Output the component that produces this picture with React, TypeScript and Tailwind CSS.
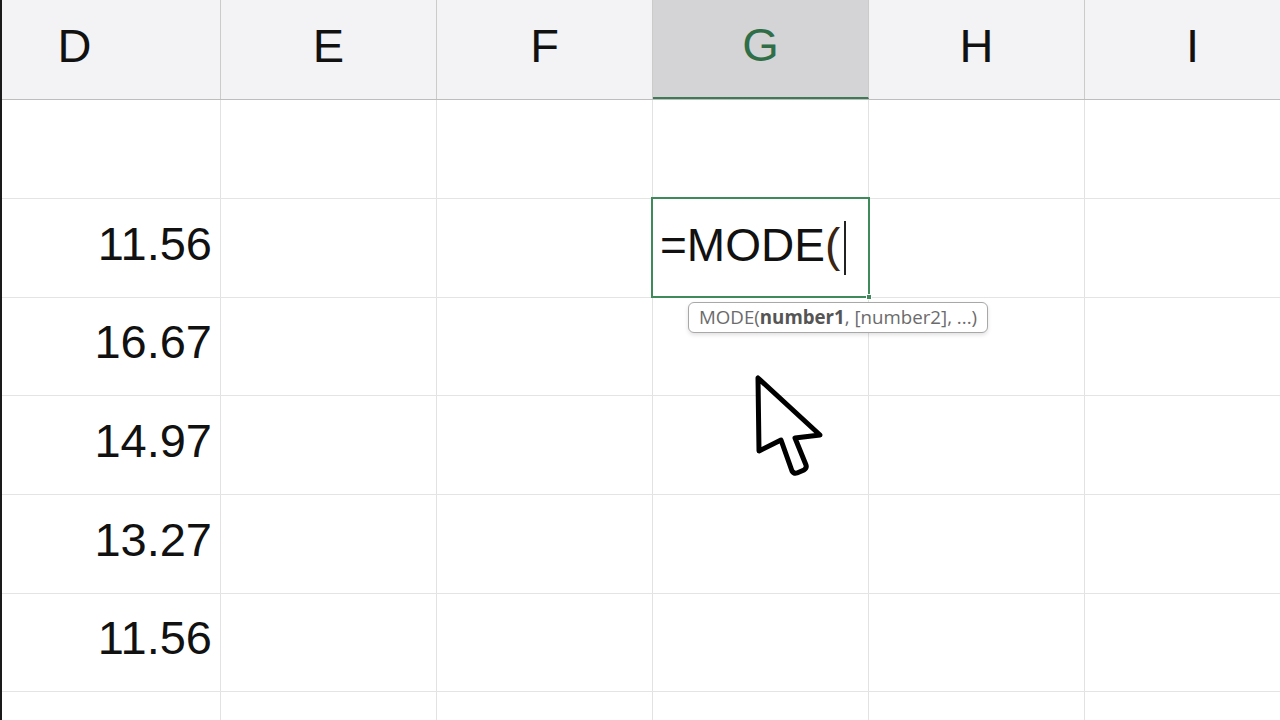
import React from "react";

const cols = ["D", "E", "F", "G", "H", "I"];
const rows: { h: string; d: string }[] = [
  { h: "h-[99px]", d: "" },
  { h: "h-[99px]", d: "11.56" },
  { h: "h-[98px]", d: "16.67" },
  { h: "h-[99px]", d: "14.97" },
  { h: "h-[99px]", d: "13.27" },
  { h: "h-[98px]", d: "11.56" },
  { h: "h-[99px]", d: "9.34" },
];

const gridCols = "grid-cols-[292px_216px_216px_216px_216px_216px]";

export default function App() {
  return (
    <div
      className="relative h-[720px] w-[1280px] overflow-hidden bg-white text-black"
      style={{ fontFamily: '"Liberation Sans", Arial, sans-serif' }}
    >
      <div className="-ml-[71px] w-[1372px]">
        {/* column headers */}
        <div className={`grid h-[100px] ${gridCols} border-b border-[#bdbdbd]`}>
          {cols.map((c) => (
            <div
              key={c}
              className={`flex items-center justify-center border-r border-[#cbcbcb] pb-[8px] text-[47px] leading-none ${
                c === "G"
                  ? "border-b-2 border-b-[#3d7a55] bg-[#d4d4d6] text-[#2f6e46]"
                  : "bg-[#f3f2f4] text-[#111]"
              }`}
            >
              {c}
            </div>
          ))}
        </div>

        {rows.map((r, i) => (
          <div key={i} className={`grid ${r.h} ${gridCols} border-b border-[#e4e4e4]`}>
            <div className="flex items-center justify-end border-r border-[#e2e2e2] pr-[8px] pb-[10px] text-[47px] leading-none text-[#111]">
              {r.d}
            </div>
            <div className="border-r border-[#e2e2e2]" />
            <div className="border-r border-[#e2e2e2]" />
            <div className="relative border-r border-[#e2e2e2]">
              {i === 1 && <ActiveCell />}
            </div>
            <div className="border-r border-[#e2e2e2]" />
            <div />
          </div>
        ))}
      </div>

      {/* window frame edge */}
      <div className="absolute left-0 top-0 h-full w-[2px] bg-[#1a1a1a]" />
    </div>
  );
}

function ActiveCell() {
  return (
    <>
      <div className="absolute -left-[2px] -top-[2px] z-10 flex h-[101px] w-[219px] items-center border-2 border-[#3f8a5a] bg-white pb-[6px] pl-[7px] text-[46px] leading-none">
        <span className="text-[#111]">=MODE</span>
        <span className="text-[#3a2412]">(</span>
        <span className="ml-[4px] mt-[6px] h-[54px] w-[2px] bg-[#222]" />
        <span className="absolute -bottom-[4px] -right-[4px] h-[6px] w-[6px] border border-white bg-[#3f8a5a]" />
      </div>
      <div
        className="absolute left-[35px] top-[103px] z-20 flex h-[31px] items-center whitespace-nowrap rounded-[6px] border border-[#a8a8a8] bg-white px-[10px] text-[18.7px] text-[#6b6b6b] shadow-[0_2px_4px_rgba(0,0,0,0.12)]"
        style={{ fontFamily: '"Open Sans", "Noto Sans", sans-serif' }}
      >
        MODE(<b className="font-bold text-[#555]">number1</b>, [number2], ...)
      </div>
      <svg
        className="absolute left-[95px] top-[169px] z-30"
        width="84"
        height="114"
        viewBox="0 0 84 114"
      >
        <path
          d="M10 10 L11 83 L33 72 L44 103 Q46 106 49 105 L56 102 Q59 100 58 97 L47 70 L72 67 Z"
          fill="white"
          stroke="black"
          strokeWidth="5"
          strokeLinejoin="round"
        />
      </svg>
    </>
  );
}
